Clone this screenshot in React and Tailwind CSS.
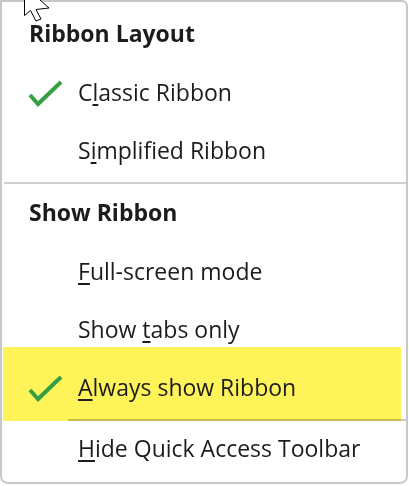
import React from 'react';

const Check = () => (
  <svg width="36" height="28" viewBox="0 0 36 28" className="shrink-0">
    <polyline
      points="2,15 10,24 33,2"
      fill="none"
      stroke="#35a043"
      strokeWidth="4"
      strokeLinecap="butt"
      strokeLinejoin="miter"
    />
  </svg>
);

const Item = ({ checked, pre, acc, post }) => (
  <div className="h-[58px] flex items-center">
    <div className="w-[76px] pl-[26px] flex items-center">{checked && <Check />}</div>
    <span className="text-[23px] text-[#1c1c1c] pb-[4px]">
      {pre}
      <span className="underline underline-offset-[3px] decoration-[1.5px]">{acc}</span>
      {post}
    </span>
  </div>
);

const Heading = ({ children }) => (
  <div className="h-[58px] flex items-center pl-[27px]">
    <span className="text-[23px] font-bold text-[#1c1c1c] pb-[5px]">{children}</span>
  </div>
);

export default function App() {
  return (
    <div className="w-[409px] h-[486px] bg-white relative overflow-hidden" style={{ fontFamily: '"Open Sans", "Noto Sans", sans-serif' }}>
      <div className="w-[408px] h-[484px] border-2 border-[#c8c8c8] rounded-b-[8px] rounded-tr-[6px] pt-[5px] relative">
        <Heading>Ribbon Layout</Heading>
        <Item checked pre="C" acc="l" post="assic Ribbon" />
        <Item pre="S" acc="i" post="mplified Ribbon" />
        <div className="mt-px h-[2px] bg-[#d0d0d0] ml-[2px]" />
        <div className="mt-[2px]">
          <Heading>Show Ribbon</Heading>
        </div>
        <Item pre="" acc="F" post="ull-screen mode" />
        <Item pre="Show " acc="t" post="abs only" />

        {/* highlight */}
        <div className="absolute left-[1px] top-[345px] w-[398px] h-[74px] bg-[#fff35a] mix-blend-multiply" />
        <div className="relative">
          <Item checked pre="" acc="A" post="lways show Ribbon" />
        </div>
        <div className="h-[2px] bg-[#c8c8c8] ml-[66px] mt-[1px]" />
        <Item pre="" acc="H" post="ide Quick Access Toolbar" />
      </div>

      {/* mouse pointer */}
      <svg className="absolute left-0 top-0" width="60" height="30" viewBox="0 0 60 30">
        <polygon
          points="24.5,-14 24.5,15.5 30.5,10.5 36,21 41,19 36,9.5 49,8 "
          fill="#fff"
          stroke="#000"
          strokeWidth="1"
        />
      </svg>
    </div>
  );
}
